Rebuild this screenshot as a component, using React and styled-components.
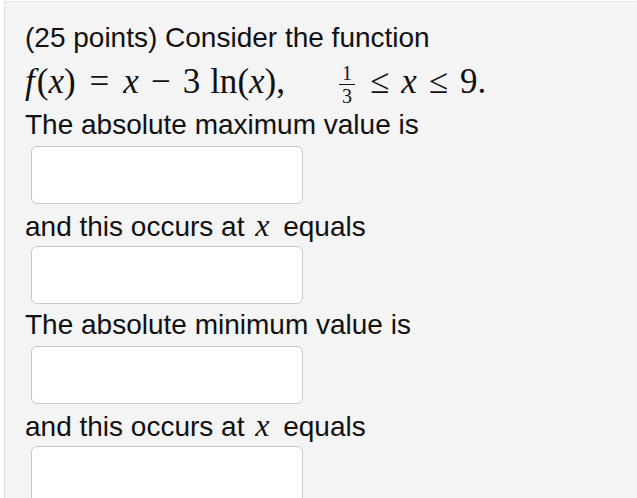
import React from "react";
import styled, { createGlobalStyle } from "styled-components";

const Global = createGlobalStyle`
  html, body { margin: 0; padding: 0; background: #ffffff; overflow: hidden; }
  body { font-family: "Liberation Sans", Arial, sans-serif; }
`;

const Page = styled.div`
  padding: 1px 0 0 4px;
  width: 700px;
`;

const Panel = styled.div`
  background: #f4f4f4;
  border-top: 1px solid #e6e6e6;
  border-left: 1px solid #dedede;
  padding: 19px 20px 0 20px;
  min-height: 520px;
  color: #111111;
  font-size: 28px;
`;

const Line = styled.div`
  line-height: 34px;
  height: 34px;
  white-space: nowrap;
`;

const MathLine = styled.div`
  font-family: "Liberation Serif", "Times New Roman", serif;
  font-size: 35px;
  line-height: 53px;
  height: 53px;
  white-space: nowrap;
`;

const Var = styled.span`
  font-style: italic;
  margin-right: ${(p) => p.$r || 0}px;
`;

const Op = styled.span`
  margin: 0 ${(p) => p.$m}px;
`;

const Fn = styled.span`
  margin-left: ${(p) => p.$l || 0}px;
`;

const Frac = styled.span`
  display: inline-flex;
  flex-direction: column;
  align-items: center;
  font-size: 20px;
  line-height: 17px;
  vertical-align: middle;
  margin: 0 3px 0 54px;
`;

const Num = styled.span`
  padding: 0 3px 2px;
  border-bottom: 1.5px solid #111;
`;

const Den = styled.span`
  padding: 3px 3px 0;
`;

const InlineX = styled.span`
  font-family: "Liberation Serif", "Times New Roman", serif;
  font-style: italic;
  font-size: 32px;
  margin: 0 6px 0 3px;
`;

const Answer = styled.div`
  box-sizing: border-box;
  width: 272px;
  height: 58px;
  margin: 4px 0 4px 6px;
  background: #ffffff;
  border: 1.5px solid #c8c8c8;
  border-radius: 6px;
`;

export default function App() {
  return (
    <>
      <Global />
      <Page>
        <Panel>
          <Line>(25 points) Consider the function</Line>
          <MathLine>
            <Var $r={2}>f</Var>(<Var>x</Var>)
            <Op $m={14}>=</Op>
            <Var>x</Var>
            <Op $m={12}>−</Op>
            3<Fn $l={10}>ln</Fn>(<Var>x</Var>),
            <Frac>
              <Num>1</Num>
              <Den>3</Den>
            </Frac>
            <Op $m={12}>≤</Op>
            <Var>x</Var>
            <Op $m={12}>≤</Op>
            9.
          </MathLine>
          <Line>The absolute maximum value is</Line>
          <Answer />
          <Line>
            and this occurs at <InlineX>x</InlineX> equals
          </Line>
          <Answer />
          <Line>The absolute minimum value is</Line>
          <Answer />
          <Line>
            and this occurs at <InlineX>x</InlineX> equals
          </Line>
          <Answer />
        </Panel>
      </Page>
    </>
  );
}
